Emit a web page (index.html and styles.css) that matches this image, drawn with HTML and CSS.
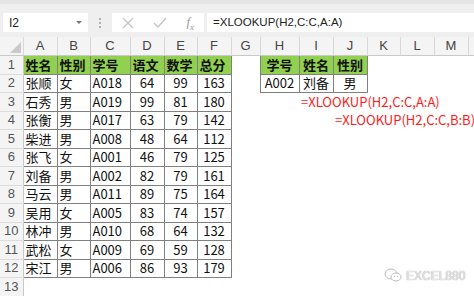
FILE: index.html
```html
<!doctype html>
<html lang="zh">
    <head>
        <meta charset="UTF-8">
        <title>XLOOKUP</title>
        <link rel="stylesheet" href="styles.css">
    </head>
    <body>
        <div class="toolbar">
            <div class="namebox">
                <span>I2</span>
                <span class="caret"></span>
            </div>
            <div class="grip"><i></i><i></i><i></i></div>
            <div class="fxbox">
                <svg width="12" height="12" viewBox="0 0 12 12"><path d="M1 1L11 11M11 1L1 11" stroke="#c4c4c4" stroke-width="1.3" fill="none"/></svg>
                <svg width="14" height="12" viewBox="0 0 14 12"><path d="M1 6L5 10L13 1" stroke="#c4c4c4" stroke-width="1.4" fill="none"/></svg>
                <span class="fx">f<sub>x</sub></span>
            </div>
            <div class="formula">=XLOOKUP(H2,C:C,A:A)</div>
        </div>

        <table class="sheet">
            <colgroup>
                <col class="c-row">
                <col class="c-a"><col class="c-b"><col class="c-c"><col class="c-d"><col class="c-e"><col class="c-f">
                <col class="c-g"><col class="c-h"><col class="c-i"><col class="c-j"><col class="c-k"><col class="c-l"><col class="c-m"><col class="c-n">
            </colgroup>
            <tr class="col-head">
                <th class="corner"><span class="tri"></span></th>
                <th>A</th><th>B</th><th>C</th><th>D</th><th>E</th><th>F</th><th>G</th><th>H</th><th>I</th><th>J</th><th>K</th><th>L</th><th>M</th><th></th>
            </tr>
            <tr>
                <th class="row-head">1</th>
                <td class="b hd">姓名</td><td class="b hd">性别</td><td class="b hd">学号</td><td class="b hd">语文</td><td class="b hd">数学</td><td class="b hd">总分</td>
                <td></td><td class="b hd mid">学号</td><td class="b hd mid">姓名</td><td class="b hd mid">性别</td><td></td><td></td><td></td><td></td>
            </tr>
            <tr>
                <th class="row-head">2</th>
                <td class="b">张顺</td><td class="b">女</td><td class="b">A018</td><td class="b mid">64</td><td class="b mid">99</td><td class="b mid">163</td>
                <td></td><td class="b mid">A002</td><td class="b mid">刘备</td><td class="b mid">男</td><td></td><td></td><td></td><td></td>
            </tr>
            <tr>
                <th class="row-head">3</th>
                <td class="b">石秀</td><td class="b">男</td><td class="b">A019</td><td class="b mid">99</td><td class="b mid">81</td><td class="b mid">180</td>
                <td></td><td></td><td class="note">=XLOOKUP(H2,C:C,A:A)</td><td></td><td></td><td></td><td></td><td></td>
            </tr>
            <tr>
                <th class="row-head">4</th>
                <td class="b">张衡</td><td class="b">男</td><td class="b">A017</td><td class="b mid">63</td><td class="b mid">79</td><td class="b mid">142</td>
                <td></td><td></td><td></td><td class="note">=XLOOKUP(H2,C:C,B:B)</td><td></td><td></td><td></td><td></td>
            </tr>
            <tr>
                <th class="row-head">5</th>
                <td class="b">柴进</td><td class="b">男</td><td class="b">A008</td><td class="b mid">48</td><td class="b mid">64</td><td class="b mid">112</td>
                <td></td><td></td><td></td><td></td><td></td><td></td><td></td><td></td>
            </tr>
            <tr>
                <th class="row-head">6</th>
                <td class="b">张飞</td><td class="b">女</td><td class="b">A001</td><td class="b mid">46</td><td class="b mid">79</td><td class="b mid">125</td>
                <td></td><td></td><td></td><td></td><td></td><td></td><td></td><td></td>
            </tr>
            <tr>
                <th class="row-head">7</th>
                <td class="b">刘备</td><td class="b">男</td><td class="b">A002</td><td class="b mid">82</td><td class="b mid">79</td><td class="b mid">161</td>
                <td></td><td></td><td></td><td></td><td></td><td></td><td></td><td></td>
            </tr>
            <tr>
                <th class="row-head">8</th>
                <td class="b">马云</td><td class="b">男</td><td class="b">A011</td><td class="b mid">89</td><td class="b mid">75</td><td class="b mid">164</td>
                <td></td><td></td><td></td><td></td><td></td><td></td><td></td><td></td>
            </tr>
            <tr>
                <th class="row-head">9</th>
                <td class="b">吴用</td><td class="b">女</td><td class="b">A005</td><td class="b mid">83</td><td class="b mid">74</td><td class="b mid">157</td>
                <td></td><td></td><td></td><td></td><td></td><td></td><td></td><td></td>
            </tr>
            <tr>
                <th class="row-head">10</th>
                <td class="b">林冲</td><td class="b">男</td><td class="b">A010</td><td class="b mid">68</td><td class="b mid">64</td><td class="b mid">132</td>
                <td></td><td></td><td></td><td></td><td></td><td></td><td></td><td></td>
            </tr>
            <tr>
                <th class="row-head">11</th>
                <td class="b">武松</td><td class="b">女</td><td class="b">A009</td><td class="b mid">69</td><td class="b mid">59</td><td class="b mid">128</td>
                <td></td><td></td><td></td><td></td><td></td><td></td><td></td><td></td>
            </tr>
            <tr>
                <th class="row-head">12</th>
                <td class="b">宋江</td><td class="b">男</td><td class="b">A006</td><td class="b mid">86</td><td class="b mid">93</td><td class="b mid">179</td>
                <td></td><td></td><td></td><td></td><td></td><td></td><td></td><td></td>
            </tr>
            <tr>
                <th class="row-head">13</th>
                <td></td><td></td><td></td><td></td><td></td><td></td>
                <td></td><td></td><td></td><td></td><td></td><td></td><td></td><td></td>
            </tr>
        </table>

        <div class="watermark">
            <svg width="18" height="15" viewBox="0 0 18 15">
                <ellipse cx="7" cy="6" rx="6" ry="5" fill="none" stroke="#bdbdbd" stroke-width="1"/>
                <ellipse cx="12" cy="9" rx="5" ry="4" fill="#fff" stroke="#bdbdbd" stroke-width="1"/>
                <circle cx="10.5" cy="8.5" r=".7" fill="#bdbdbd"/>
                <circle cx="13.5" cy="8.5" r=".7" fill="#bdbdbd"/>
            </svg>
            <span>EXCEL880</span>
        </div>
    </body>
</html>
```

FILE: styles.css
```css
body {
    margin: 0;
    width: 474px;
    height: 296px;
    overflow: hidden;
    position: relative;
    background: #fff;
    font-family: "Noto Sans CJK SC", "Noto Sans", sans-serif;
}

.toolbar {
    display: flex;
    align-items: center;
    height: 37px;
    padding-top: 4px;
    box-sizing: border-box;
    background: #efefef;
    border-top: 4px solid #e4e4e4;
}

.namebox {
    display: flex;
    align-items: center;
    justify-content: space-between;
    width: 85px;
    height: 19px;
    margin-left: 3px;
    padding: 0 6px 0 6px;
    box-sizing: border-box;
    background: #fff;
    font-family: "Liberation Sans", sans-serif;
    font-size: 12px;
    color: #222;
}

.caret {
    width: 0;
    height: 0;
    border-left: 3px solid transparent;
    border-right: 3px solid transparent;
    border-top: 3px solid #777;
}

.grip {
    display: flex;
    flex-direction: column;
    gap: 2px;
    margin: 0 11px 0 11px;
}

.grip i {
    width: 2px;
    height: 2px;
    background: #b0b0b0;
}

.fxbox {
    display: flex;
    align-items: center;
    justify-content: space-between;
    width: 92px;
    height: 19px;
    padding: 0 10px 0 10px;
    box-sizing: border-box;
    background: #fff;
}

.fx {
    font-family: "Liberation Serif", serif;
    font-style: italic;
    font-size: 13px;
    color: #999;
}

.fx sub {
    font-size: 9px;
}

.formula {
    flex: 1;
    height: 19px;
    margin-left: 3px;
    padding-left: 6px;
    background: #fff;
    font-family: "Liberation Sans", sans-serif;
    font-size: 11.5px;
    line-height: 19px;
    color: #222;
}

.sheet {
    table-layout: fixed;
    border-collapse: collapse;
    width: 502px;
    font-size: 13px;
    color: #111;
}

.c-row { width: 23px; }
.c-a { width: 34px; }
.c-b { width: 33px; }
.c-c { width: 40px; }
.c-d { width: 34px; }
.c-e { width: 33px; }
.c-f { width: 34px; }
.c-g { width: 29px; }
.c-h { width: 39px; }
.c-i { width: 34px; }
.c-j { width: 34px; }
.c-k { width: 33px; }
.c-l { width: 34px; }
.c-m { width: 34px; }
.c-n { width: 34px; }

.sheet tr {
    height: 18.5px;
}

.sheet td,
.sheet th {
    padding: 0 0 0 2px;
    line-height: 16px;
    white-space: nowrap;
}

.col-head {
    height: 18px;
}

.col-head th {
    background: #f4f4f4;
    border-right: 1px solid #d8d8d8;
    border-bottom: 1px solid #c8c8c8;
    font-family: "Liberation Sans", sans-serif;
    font-weight: normal;
    font-size: 13px;
    color: #444;
    text-align: center;
    padding: 0;
}

.corner {
    position: relative;
}

.tri {
    position: absolute;
    right: 2px;
    bottom: 2px;
    width: 0;
    height: 0;
    border-left: 11px solid transparent;
    border-bottom: 11px solid #c9c9c9;
}

.row-head {
    background: #f4f4f4;
    border-right: 1px solid #c8c8c8;
    border-bottom: 1px solid #dcdcdc;
    font-family: "Liberation Sans", sans-serif;
    font-weight: normal;
    font-size: 13px;
    color: #555;
    text-align: center;
    padding: 0 !important;
}

.b {
    border: 1px solid #808080;
}

.hd {
    background: #92d050;
    font-weight: bold;
}

.mid {
    text-align: center;
    padding: 0 !important;
}

.note {
    overflow: visible;
    color: #ff1a1a;
    font-size: 13px;
}

.watermark {
    position: absolute;
    left: 384px;
    top: 268px;
    display: flex;
    align-items: center;
    gap: 4px;
    font-family: "Liberation Sans", sans-serif;
    font-size: 12px;
    color: #e6e6e6;
    text-shadow: 0 0 1px #8a8a8a;
}
```
